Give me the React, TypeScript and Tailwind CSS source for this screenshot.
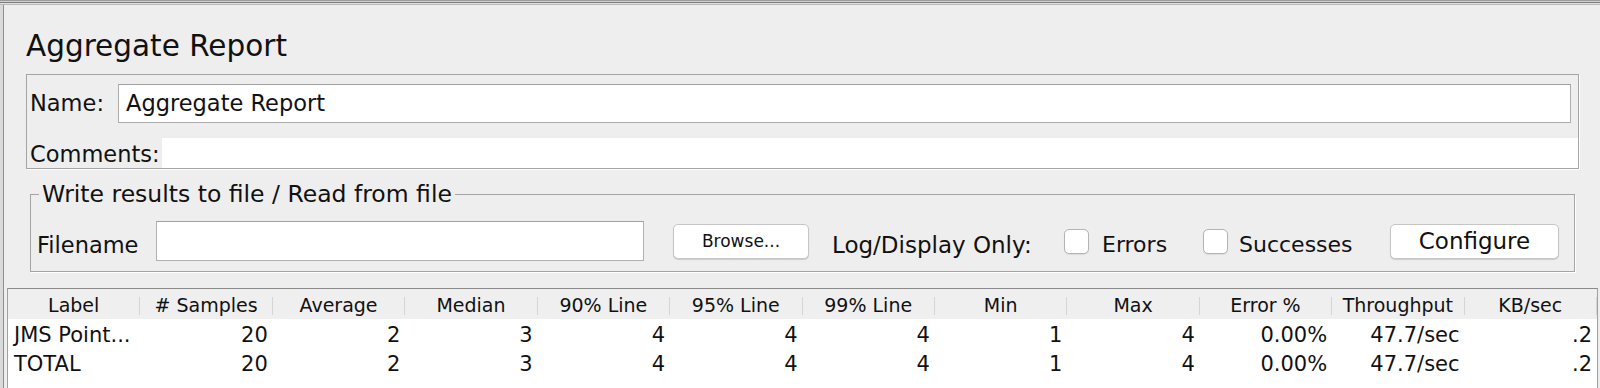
import React from "react";

const headers = [
  "Label",
  "# Samples",
  "Average",
  "Median",
  "90% Line",
  "95% Line",
  "99% Line",
  "Min",
  "Max",
  "Error %",
  "Throughput",
  "KB/sec",
];

const rows = [
  ["JMS Point...", "20", "2", "3", "4", "4", "4", "1", "4", "0.00%", "47.7/sec", ".2"],
  ["TOTAL", "20", "2", "3", "4", "4", "4", "1", "4", "0.00%", "47.7/sec", ".2"],
];

function Checkbox() {
  return (
    <div className="w-[25px] h-[25px] shrink-0 bg-white border border-[#b4b4b4] rounded-[5px] shadow-[0_1px_1px_rgba(0,0,0,0.08)]" />
  );
}

export default function App() {
  return (
    <div className="w-[1600px] h-[388px] overflow-hidden bg-[#eeeeee] font-['DejaVu_Sans',sans-serif] text-[#111111]">
      <div className="h-px bg-[#9a9a9a]" />
      <div className="h-px bg-[#d2d2d2]" />
      <div className="h-px bg-[#7b7b7b]" />
      <div className="h-px bg-[#e2e2e2]" />
      <div className="h-px bg-[#b9b9b9]" />
      <div className="flex h-[383px]">
        <div className="w-[3px] bg-[#dadada]" />
        <div className="w-px bg-[#8f8f8f]" />
        <div className="flex-1 flex flex-col">
          <div className="ml-[22px] mt-[23px] h-[36px] leading-[36px] text-[29.5px] whitespace-nowrap">
            Aggregate Report
          </div>

          <div className="ml-[22px] mt-[10px] w-[1553px] border border-[#a4a4a4] shadow-[1px_1px_0_#ffffff] flex flex-col">
            <div className="flex mt-[9px] h-[39px]">
              <div className="pl-[3px] w-[91px] shrink-0 leading-[39px] text-[22.5px] whitespace-nowrap">
                Name:
              </div>
              <div className="w-[1453px] h-[39px] bg-white border border-[#acacac] border-t-[#9f9f9f] pl-[7px] leading-[37px] text-[22.5px] whitespace-nowrap">
                Aggregate Report
              </div>
            </div>
            <div className="flex mt-[15px] h-[30px]">
              <div className="pl-[3px] w-[135px] shrink-0 h-[30px] leading-[32px] text-[22.5px] whitespace-nowrap">
                Comments:
              </div>
              <div className="flex-1 bg-white" />
            </div>
          </div>

          <fieldset className="ml-[26px] mt-[11px] w-[1545px] border border-[#a4a4a4] shadow-[1px_1px_0_#ffffff]">
            <legend className="ml-[8px] px-[3px] text-[23.5px] leading-[28px] whitespace-nowrap">
              Write results to file / Read from file
            </legend>
            <div className="flex items-center pl-[6px] mt-[13px] mb-[10px] h-[40px]">
              <div className="w-[101px] shrink-0 text-[22.5px] leading-[28px] pt-[8px] whitespace-nowrap">
                Filename
              </div>
              <div className="ml-[18px] w-[488px] h-[40px] shrink-0 bg-white border border-[#b0b0b0] border-t-[#a0a0a0]" />
              <div className="ml-[29px] w-[136px] h-[35px] shrink-0 bg-white border border-[#c6c6c6] rounded-[5px] shadow-[0_1px_1px_rgba(0,0,0,0.15)] flex items-center justify-center text-[17px] leading-[20px] whitespace-nowrap">
                Browse...
              </div>
              <div className="ml-[23px] w-[208px] shrink-0 text-[23px] leading-[28px] pt-[8px] whitespace-nowrap">
                Log/Display Only:
              </div>
              <div className="ml-[24px]">
                <Checkbox />
              </div>
              <div className="ml-[13px] w-[67px] shrink-0 text-[22px] leading-[28px] pt-[8px] whitespace-nowrap">
                Errors
              </div>
              <div className="ml-[34px]">
                <Checkbox />
              </div>
              <div className="ml-[11px] w-[118px] shrink-0 text-[22px] leading-[28px] pt-[8px] whitespace-nowrap">
                Successes
              </div>
              <div className="ml-[33px] w-[169px] h-[35px] shrink-0 bg-white border border-[#c6c6c6] rounded-[5px] shadow-[0_1px_1px_rgba(0,0,0,0.15)] flex items-center justify-center text-[23px] leading-[28px] whitespace-nowrap">
                Configure
              </div>
            </div>
          </fieldset>

          <div className="ml-[3px] mt-[16px] w-[1591px] flex-1 bg-white border-t border-t-[#8a8a8a] border-l border-l-[#a0a0a0] border-r border-r-[#a0a0a0]">
            <div className="grid grid-cols-12 h-[30px] bg-[#efefef]">
              {headers.map((h) => (
                <div key={h} className="flex h-[30px] min-w-0">
                  <div className="flex-1 min-w-0 text-center text-[19px] h-[30px] leading-[32px] whitespace-nowrap overflow-hidden">
                    {h}
                  </div>
                  <div className="w-px h-[18px] mt-[8px] bg-[#d5d5d5] shrink-0" />
                </div>
              ))}
            </div>
            {rows.map((r, ri) => (
              <div key={ri} className="grid grid-cols-12 h-[29px]">
                {r.map((c, ci) => (
                  <div
                    key={ci}
                    className={
                      ci === 0
                        ? "min-w-0 pl-[6px] text-left text-[21px] h-[29px] leading-[33px] whitespace-nowrap overflow-hidden"
                        : "min-w-0 pr-[5px] text-right text-[21px] h-[29px] leading-[33px] whitespace-nowrap overflow-hidden"
                    }
                  >
                    {c}
                  </div>
                ))}
              </div>
            ))}
          </div>
        </div>
      </div>
    </div>
  );
}
